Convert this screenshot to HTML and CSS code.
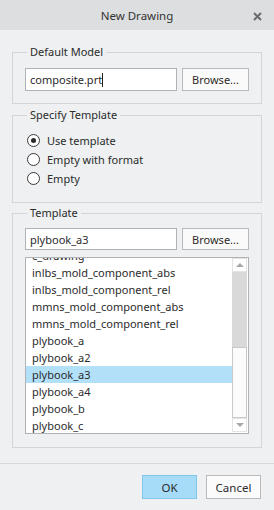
FILE: index.html
```html
<!DOCTYPE html>
<html lang="en">
<head>
    <meta charset="UTF-8">
    <title>New Drawing</title>
    <link rel="stylesheet" href="styles.css">
</head>
<body>
    <div class="dialog">
        <div class="titlebar">
            <span class="title">New Drawing</span>
            <svg class="close" width="9" height="9" viewBox="0 0 9 9">
                <path d="M1 1 L8 8 M8 1 L1 8" stroke="#6b6b6b" stroke-width="2"/>
            </svg>
        </div>

        <fieldset class="group group-model">
            <legend>Default Model</legend>
            <div class="field-row">
                <div class="textbox">composite.prt<span class="caret"></span></div>
                <button class="btn">Browse...</button>
            </div>
        </fieldset>

        <fieldset class="group group-spec">
            <legend>Specify Template</legend>
            <div class="radio-row"><span class="radio checked"></span>Use template</div>
            <div class="radio-row"><span class="radio"></span>Empty with format</div>
            <div class="radio-row"><span class="radio"></span>Empty</div>
        </fieldset>

        <fieldset class="group group-template">
            <legend>Template</legend>
            <div class="field-row">
                <div class="textbox">plybook_a3</div>
                <button class="btn">Browse...</button>
            </div>
            <div class="listbox">
                <div class="list-items">
                    <div class="item">c_drawing</div>
                    <div class="item">inlbs_mold_component_abs</div>
                    <div class="item">inlbs_mold_component_rel</div>
                    <div class="item">mmns_mold_component_abs</div>
                    <div class="item">mmns_mold_component_rel</div>
                    <div class="item">plybook_a</div>
                    <div class="item">plybook_a2</div>
                    <div class="item selected">plybook_a3</div>
                    <div class="item">plybook_a4</div>
                    <div class="item">plybook_b</div>
                    <div class="item">plybook_c</div>
                </div>
                <div class="scrollbar">
                    <div class="arrow up"></div>
                    <div class="thumb"></div>
                    <div class="track"></div>
                    <div class="arrow down"></div>
                </div>
            </div>
        </fieldset>

        <div class="footer">
            <button class="btn btn-ok">OK</button>
            <button class="btn btn-cancel">Cancel</button>
        </div>
    </div>
</body>
</html>
```

FILE: styles.css
```css
body {
    margin: 0;
    padding: 0;
    background: #eef0f1;
    font-family: 'Noto Sans', sans-serif;
    font-size: 11px;
    color: #2b2b2b;
}
.dialog {
    width: 274px;
    height: 510px;
    overflow: hidden;
}
.titlebar {
    height: 30px;
    background: #dcdedf;
    display: flex;
    align-items: center;
    justify-content: center;
    position: relative;
}
.title {
    font-size: 11.5px;
    color: #333;
}
.close {
    position: absolute;
    right: 12px;
    top: 12px;
}
.group {
    margin: 0 12px;
    padding: 0 12px;
    border: 1px solid #d3d6d8;
    min-width: 0;
}
.group legend {
    margin-left: 2px;
    padding: 0 3px;
    line-height: 16px;
}
.group-model {
    margin-top: 14px;
    padding-bottom: 12px;
}
.group-model .field-row {
    margin-top: 8px;
}
.group-model .textbox,
.group-model .btn {
    height: 23px;
}
.group-spec {
    margin-top: 3px;
    padding-bottom: 14px;
}
.group-template {
    margin-top: 2px;
    padding-bottom: 13px;
}
.field-row {
    display: flex;
    gap: 5px;
    margin-top: 7px;
}
.textbox {
    width: 152px;
    height: 22px;
    box-sizing: border-box;
    border: 1px solid #b0b3b6;
    background: #fff;
    padding: 0 4px;
    display: flex;
    align-items: center;
    white-space: nowrap;
}
.caret {
    display: inline-block;
    width: 1px;
    height: 14px;
    background: #222;
}
.btn {
    font-family: 'Noto Sans', sans-serif;
    font-size: 11px;
    color: #2b2b2b;
    background: #fafafa;
    border: 1px solid #b7b9bb;
    border-radius: 0;
    padding: 0;
    height: 22px;
    width: 67px;
}
.radio-row {
    height: 19px;
    display: flex;
    align-items: center;
    padding-left: 2px;
}
.group-spec legend + .radio-row {
    margin-top: 8px;
}
.radio {
    width: 11px;
    height: 11px;
    border: 1px solid #3a3a3a;
    border-radius: 50%;
    background: #fff;
    margin-right: 7px;
    display: flex;
    align-items: center;
    justify-content: center;
}
.radio.checked::after {
    content: "";
    width: 5px;
    height: 5px;
    border-radius: 50%;
    background: #2b2b2b;
}
.listbox {
    margin-top: 7px;
    width: 224px;
    height: 177px;
    box-sizing: border-box;
    border: 1px solid #b0b3b6;
    background: #fff;
    display: flex;
    overflow: hidden;
}
.list-items {
    flex: 1;
    margin-top: -11px;
}
.item {
    height: 17px;
    line-height: 17px;
    padding-left: 6px;
    white-space: nowrap;
}
.item.selected {
    background: #b3e0f9;
}
.scrollbar {
    width: 15px;
    margin-right: 1px;
    display: flex;
    flex-direction: column;
    padding-bottom: 1px;
}
.arrow {
    height: 14px;
    box-sizing: border-box;
    border: 1px solid #e4e4e4;
    display: flex;
    align-items: center;
    justify-content: center;
}
.arrow::after {
    content: "";
    border-left: 4px solid transparent;
    border-right: 4px solid transparent;
}
.arrow.up::after {
    border-bottom: 4px solid #a8a8a8;
}
.arrow.down::after {
    border-top: 4px solid #a8a8a8;
}
.thumb {
    height: 75px;
    background: #d9d9d9;
}
.track {
    flex: 1;
    box-sizing: border-box;
    border: 1px solid #c9c9c9;
    background: #fbfbfb;
}
.footer {
    margin-top: 15px;
    border-top: 1px solid #d6d8d9;
    display: flex;
    justify-content: flex-end;
    gap: 9px;
    padding: 11px 13px 0 0;
}
.footer .btn {
    width: 55px;
    height: 24px;
    font-size: 11.5px;
}
.btn-ok {
    background: #a6dcf8;
    border-color: #83c6ec;
}
.btn-cancel {
    background: #fbfbfb;
}
```
